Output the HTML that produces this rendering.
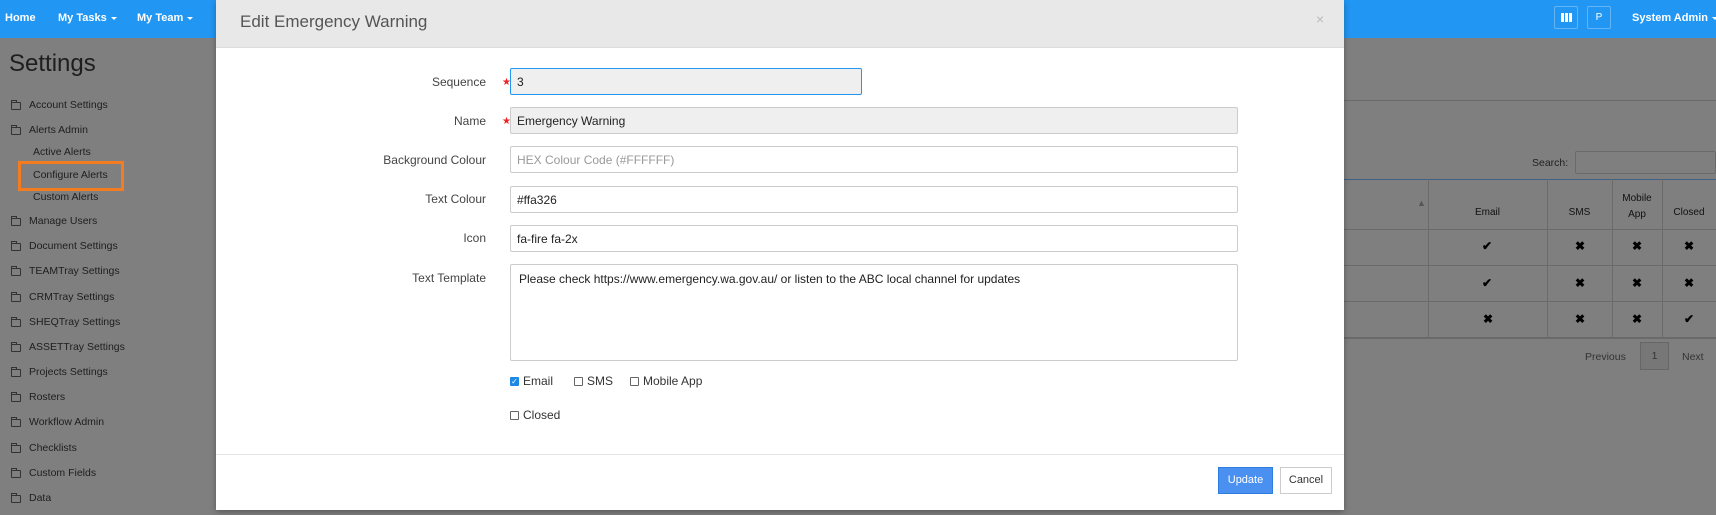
<!DOCTYPE html>
<html><head><meta charset="utf-8">
<style>
*{box-sizing:border-box;margin:0;padding:0}
body{width:1716px;height:515px;position:relative;overflow:hidden;background:#7f7f7f;font-family:"Liberation Sans",sans-serif;color:#1c1c1c}
.a{position:absolute;white-space:nowrap}
.nav{position:absolute;left:0;top:0;width:1716px;height:38px;background:#2196f3}
.nav .a{color:#fff;font-size:11px;font-weight:bold;top:12px}
.car{display:inline-block;border-left:3px solid transparent;border-right:3px solid transparent;border-top:3px solid #fff;margin-left:4px;vertical-align:middle}
.sb{font-size:10.5px;color:#1e1e1e}
.fold{position:absolute;width:10px;height:8px;border:1px solid #333;border-radius:1px}
.fold:before{content:"";position:absolute;left:-1px;top:-3px;width:4px;height:2px;border:1px solid #333;border-bottom:none}
.modal{position:absolute;left:216px;top:0;width:1128px;height:510px;background:#fff;box-shadow:0 2px 6px rgba(0,0,0,.3)}
.mh{position:absolute;left:0;top:0;width:100%;height:48px;background:#e8e8e8;border-bottom:1px solid #ddd}
.lbl{position:absolute;right:858px;font-size:12px;color:#444;text-align:right}
.star{position:absolute;left:286px;color:#e22;font-size:10px}
.inp{position:absolute;left:294px;width:728px;height:27px;border:1px solid #ccc;border-radius:2px;font-size:12px;padding:6px 6px;color:#222;font-family:"Liberation Sans",sans-serif}
.cb{position:absolute;width:9px;height:9px;border:1px solid #666;border-radius:1px;background:#fff}
.ck{font-size:12px;color:#333;position:absolute}
.tl{position:absolute;background:#6a6a6a}
.th{position:absolute;font-size:10px;color:#111;text-align:center}
.x{position:absolute;font-size:12px;font-weight:bold;color:#000}
</style></head><body>
<div class="nav">
<div class="a" style="left:5px">Home</div>
<div class="a" style="left:58px">My Tasks<span class="car"></span></div>
<div class="a" style="left:137px">My Team<span class="car"></span></div>
<div style="position:absolute;left:1554px;top:6px;width:24px;height:23px;border:1px solid #64b5f6;border-radius:2px"><div style="position:absolute;left:6px;top:6px;width:11px;height:9px;background:repeating-linear-gradient(90deg,#fff 0 3px,transparent 3px 4px)"></div></div>
<div style="position:absolute;left:1587px;top:6px;width:24px;height:23px;border:1px solid #64b5f6;border-radius:2px;color:#fff;font-size:10px;text-align:center;line-height:21px">P</div>
<div class="a" style="left:1632px">System Admin<span class="car"></span></div>
</div>

<div class="a" style="left:9px;top:50px;font-size:24px;color:#1e1e1e;font-weight:300">Settings</div>
<div class="sb">
<div class="fold" style="left:11px;top:102px"></div><div class="a" style="left:29px;top:99px">Account Settings</div>
<div class="fold" style="left:11px;top:127px"></div><div class="a" style="left:29px;top:124px">Alerts Admin</div>
<div class="a" style="left:33px;top:146px">Active Alerts</div>
<div style="position:absolute;left:18px;top:161px;width:106px;height:30px;border:3px solid #f47c20"></div>
<div class="a" style="left:33px;top:169px">Configure Alerts</div>
<div class="a" style="left:33px;top:191px">Custom Alerts</div>
<div class="fold" style="left:11px;top:218px"></div><div class="a" style="left:29px;top:215px">Manage Users</div>
<div class="fold" style="left:11px;top:243px"></div><div class="a" style="left:29px;top:240px">Document Settings</div>
<div class="fold" style="left:11px;top:268px"></div><div class="a" style="left:29px;top:265px">TEAMTray Settings</div>
<div class="fold" style="left:11px;top:294px"></div><div class="a" style="left:29px;top:291px">CRMTray Settings</div>
<div class="fold" style="left:11px;top:319px"></div><div class="a" style="left:29px;top:316px">SHEQTray Settings</div>
<div class="fold" style="left:11px;top:344px"></div><div class="a" style="left:29px;top:341px">ASSETTray Settings</div>
<div class="fold" style="left:11px;top:369px"></div><div class="a" style="left:29px;top:366px">Projects Settings</div>
<div class="fold" style="left:11px;top:394px"></div><div class="a" style="left:29px;top:391px">Rosters</div>
<div class="fold" style="left:11px;top:419px"></div><div class="a" style="left:29px;top:416px">Workflow Admin</div>
<div class="fold" style="left:11px;top:445px"></div><div class="a" style="left:29px;top:442px">Checklists</div>
<div class="fold" style="left:11px;top:470px"></div><div class="a" style="left:29px;top:467px">Custom Fields</div>
<div class="fold" style="left:11px;top:495px"></div><div class="a" style="left:29px;top:492px">Data</div>
</div>

<!-- background table -->
<div class="tl" style="left:1344px;top:100px;width:372px;height:1px"></div>
<div class="a" style="left:1532px;top:157px;font-size:10.5px;color:#222">Search:</div>
<div style="position:absolute;left:1575px;top:151px;width:141px;height:23px;border:1px solid #6a6a6a;border-radius:2px"></div>
<div class="tl" style="left:1344px;top:179px;width:372px;height:1px;background:#3f5f86"></div>
<div class="tl" style="left:1344px;top:229px;width:372px;height:1px"></div>
<div class="tl" style="left:1344px;top:265px;width:372px;height:1px"></div>
<div class="tl" style="left:1344px;top:301px;width:372px;height:1px"></div>
<div class="tl" style="left:1344px;top:337px;width:372px;height:2px"></div>
<div class="tl" style="left:1428px;top:179px;width:1px;height:158px"></div>
<div class="tl" style="left:1547px;top:179px;width:1px;height:158px"></div>
<div class="tl" style="left:1612px;top:179px;width:1px;height:158px"></div>
<div class="tl" style="left:1662px;top:179px;width:1px;height:158px"></div>
<div class="a" style="left:1417px;top:198px;font-size:9px;color:#555">&#9650;</div>
<div class="th" style="left:1428px;top:207px;width:119px">Email</div>
<div class="th" style="left:1547px;top:207px;width:65px">SMS</div>
<div class="th" style="left:1612px;top:191px;width:50px;line-height:16px">Mobile<br>App</div>
<div class="th" style="left:1662px;top:207px;width:54px">Closed</div>
<div class="x" style="left:1482px;top:239px">✔</div><div class="x" style="left:1575px;top:239px">✖</div><div class="x" style="left:1632px;top:239px">✖</div><div class="x" style="left:1684px;top:239px">✖</div>
<div class="x" style="left:1482px;top:276px">✔</div><div class="x" style="left:1575px;top:276px">✖</div><div class="x" style="left:1632px;top:276px">✖</div><div class="x" style="left:1684px;top:276px">✖</div>
<div class="x" style="left:1483px;top:312px">✖</div><div class="x" style="left:1575px;top:312px">✖</div><div class="x" style="left:1632px;top:312px">✖</div><div class="x" style="left:1684px;top:312px">✔</div>
<div class="a" style="left:1585px;top:351px;font-size:10.5px;color:#333">Previous</div>
<div style="position:absolute;left:1640px;top:342px;width:29px;height:28px;border:1px solid #666;background:#777;font-size:10.5px;text-align:center;line-height:26px;color:#333">1</div>
<div class="a" style="left:1682px;top:351px;font-size:10.5px;color:#333">Next</div>

<div class="modal">
<div class="mh"><div class="a" style="left:24px;top:12px;font-size:17px;color:#555">Edit Emergency Warning</div>
<div class="a" style="left:1100px;top:11px;font-size:14px;color:#bbb">×</div></div>

<div class="lbl" style="top:75px">Sequence</div><div class="star" style="top:77px">★</div>
<div class="inp" style="top:68px;width:352px;background:#efefef;border-color:#2196f3">3</div>
<div class="lbl" style="top:114px">Name</div><div class="star" style="top:116px">★</div>
<div class="inp" style="top:107px;background:#efefef">Emergency Warning</div>
<div class="lbl" style="top:153px">Background Colour</div>
<div class="inp" style="top:146px;color:#999">HEX Colour Code (#FFFFFF)</div>
<div class="lbl" style="top:192px">Text Colour</div>
<div class="inp" style="top:186px">#ffa326</div>
<div class="lbl" style="top:231px">Icon</div>
<div class="inp" style="top:225px">fa-fire fa-2x</div>
<div class="lbl" style="top:271px">Text Template</div>
<div class="inp" style="top:264px;height:97px;padding:7px 8px">Please check https://www.emergency.wa.gov.au/ or listen to the ABC local channel for updates</div>

<div class="cb" style="left:294px;top:377px;background:#1e88e5;border-color:#1e88e5;color:#fff;font-size:8px;line-height:7px;text-align:center">✓</div>
<div class="ck" style="left:307px;top:374px">Email</div>
<div class="cb" style="left:358px;top:377px"></div><div class="ck" style="left:371px;top:374px">SMS</div>
<div class="cb" style="left:414px;top:377px"></div><div class="ck" style="left:427px;top:374px">Mobile App</div>
<div class="cb" style="left:294px;top:411px"></div><div class="ck" style="left:307px;top:408px">Closed</div>

<div style="position:absolute;left:0;top:454px;width:100%;height:1px;background:#e5e5e5"></div>
<div style="position:absolute;left:1002px;top:467px;width:55px;height:27px;background:#4a90f0;border:1px solid #2f7de0;color:#fff;font-size:11px;text-align:center;line-height:25px">Update</div>
<div style="position:absolute;left:1064px;top:467px;width:52px;height:27px;background:#fff;border:1px solid #ccc;color:#333;font-size:11px;text-align:center;line-height:25px">Cancel</div>
</div>
</body></html>
